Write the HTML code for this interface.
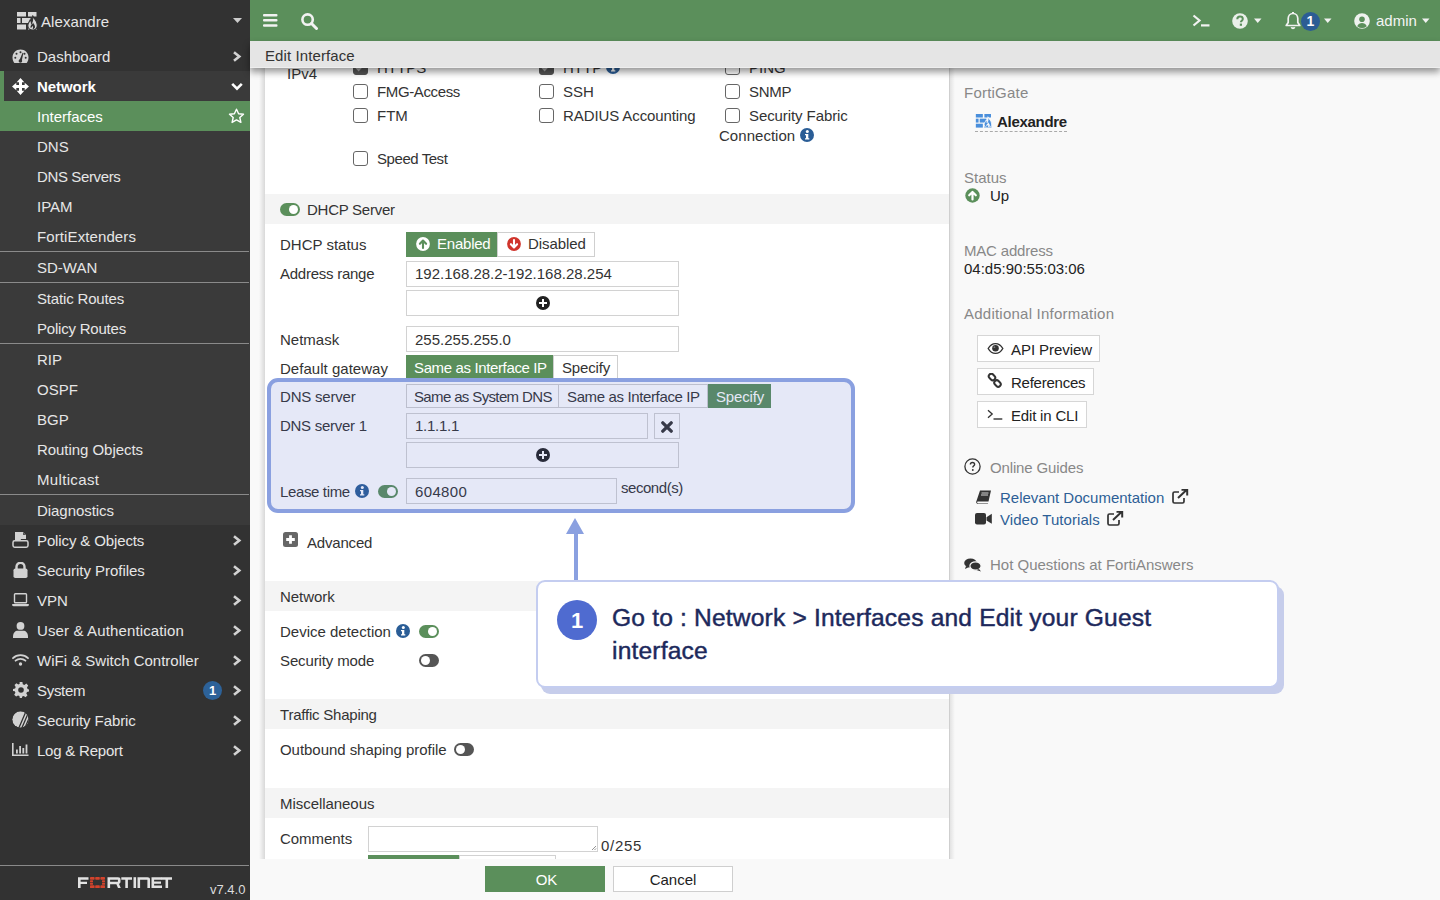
<!DOCTYPE html>
<html><head><meta charset="utf-8">
<style>
*{box-sizing:border-box;margin:0;padding:0}
html,body{width:1440px;height:900px;overflow:hidden;background:#f9f9f9;font-family:"Liberation Sans",sans-serif;font-size:15px;color:#333}
.a{position:absolute}
.t{position:absolute;white-space:nowrap;line-height:20px;height:20px}
#side{position:absolute;left:0;top:0;width:250px;height:900px;background:#323232}
#side .it{position:absolute;left:0;width:250px;height:30px;line-height:30px;color:#e6e6e6;white-space:nowrap}
#side .it span.l{position:absolute;left:37px;top:1px}
#side .sub{background:#3a3a3a}
#side .sep{position:absolute;left:0;width:249px;height:1px;background:#8a8a8a}
.chev{position:absolute;left:231px;top:10px;width:10px;height:10px}
#top{position:absolute;left:250px;top:0;width:1190px;height:41px;background:#5b8f5b}
#bar{position:absolute;left:250px;top:41px;width:1190px;height:27px;background:#e5e5e5;border-bottom:1px solid #eeeeee;box-shadow:0 4px 7px rgba(0,0,0,.42);z-index:5}
#content{position:absolute;left:265px;top:41px;width:684px;height:818px;background:#fff;overflow:hidden}
#cshadow{position:absolute;left:259px;top:41px;width:6px;height:818px;background:linear-gradient(to right,rgba(0,0,0,0),rgba(0,0,0,.13))}
#right{position:absolute;left:949px;top:41px;width:491px;height:818px;overflow:hidden;background:linear-gradient(to right,rgba(0,0,0,.09),rgba(0,0,0,0) 5px) #f9f9f9;border-left:1px solid #cfcfcf}
.sh{position:absolute;left:0;width:684px;height:30px;background:#f4f4f4}
.cb{position:absolute;width:15px;height:15px;border:1.5px solid #666;border-radius:3px;background:#fff}
.inp{position:absolute;border:1px solid #d2d2d2;background:#fff}
.btn{position:absolute;border:1px solid #cfcfcf;background:#fff;text-align:center;white-space:nowrap}
.grn{background:#5b8f5b;color:#fff;border-color:#5b8f5b}
.tog{position:absolute;width:20px;height:13px;border-radius:6.5px}
.tog.on{background:#5b8f5b}
.tog.on::after{content:"";position:absolute;right:1.6px;top:1.6px;width:9.8px;height:9.8px;border-radius:50%;background:#fff}
.tog.off{background:#555}
.tog.off::after{content:"";position:absolute;left:1.6px;top:1.6px;width:9.8px;height:9.8px;border-radius:50%;background:#fff}
.grey{color:#888}
#right .t{margin-top:1px}
.cb.chk{background:#555;border-color:#555}
.info{position:absolute;width:14px;height:14px;border-radius:50%;background:#2a5d96}
.info::before{content:"";position:absolute;left:5.6px;top:2.3px;width:3px;height:3px;border-radius:50%;background:#fff}
.info::after{content:"";position:absolute;left:4.6px;top:6px;width:2.6px;height:5.8px;border-left:1.8px solid transparent;border-top:1.2px solid #fff;background:linear-gradient(#fff,#fff) 1.8px 0/2.6px 100% no-repeat, linear-gradient(#fff,#fff) 0 100%/5px 1.6px no-repeat;box-sizing:content-box}
.plus{position:absolute;width:14px;height:14px;border-radius:50%;background:#222}
.plus::before{content:"";position:absolute;left:3px;top:5.75px;width:8px;height:2.5px;background:#fff}
.plus::after{content:"";position:absolute;left:5.75px;top:3px;width:2.5px;height:8px;background:#fff}

</style></head><body>

<!-- SIDEBAR -->
<div id="side">
  <svg class="a" style="left:17px;top:12px" width="21" height="18" viewBox="0 0 21 18">
    <g fill="#d8d8d8"><rect x="0" y="0" width="9" height="4.5"/><rect x="11" y="0" width="8.5" height="4.5"/><rect x="0" y="6" width="3.5" height="5"/><rect x="5" y="6" width="8.5" height="5"/><rect x="0" y="12.5" width="9" height="5"/><rect x="11" y="12.5" width="9" height="5"/></g>
    <path d="M15.5 3.5C16.5 6.5 20.3 8.5 20.3 13C20.3 16.3 18.3 18 15.8 18C13 18 10.8 16.3 10.8 13.5C10.8 11 12.5 9.8 13.3 7.8C14.3 9 14.5 10 14.5 11.2C15.8 9 16 6.5 15.5 3.5Z" fill="#d8d8d8" stroke="#323232" stroke-width="1.1"/>
    <path d="M16 10.5C16.8 12.3 18.3 13.3 18 15.3C17.7 16.8 16.3 17.2 15.5 17C16.3 16 16.2 14.5 15.3 13.8C15.2 15 14.6 15.6 13.8 16C13.2 15 13.6 13.5 14.5 12.8C15.3 12.2 15.8 11.5 16 10.5Z" fill="#323232"/>
  </svg>
  <div class="t" style="letter-spacing: 0.08px;left:41px;top:12px;color:#e6e6e6">Alexandre</div>
  <svg class="a" style="left:233px;top:18px" width="9" height="5"><path d="M0 0h9L4.5 5z" fill="#ccc"/></svg>

  <div class="it" style="top:41px"><span class="l">Dashboard</span></div>
  <div class="it sub" style="top:71px;border-left:4px solid #5b8f5b"><span class="l" style="letter-spacing:-0.062px;left:33px;color:#fff;font-weight:bold">Network</span></div>
  <div class="it" style="top:101px;background:#5b8f5b;color:#fff"><span class="l">Interfaces</span></div>
  <div class="a sub" style="left:0;top:131px;width:250px;height:394px"></div>
  <div class="it" style="top:131px"><span class="l">DNS</span></div>
  <div class="it" style="top:161px"><span class="l" style="letter-spacing:-0.366px;">DNS Servers</span></div>
  <div class="it" style="top:191px"><span class="l">IPAM</span></div>
  <div class="it" style="top:221px"><span class="l" style="letter-spacing:0.104px;">FortiExtenders</span></div>
  <div class="sep" style="top:251px"></div>
  <div class="it" style="top:252px"><span class="l">SD-WAN</span></div>
  <div class="sep" style="top:282px"></div>
  <div class="it" style="top:283px"><span class="l" style="letter-spacing:-0.171px;">Static Routes</span></div>
  <div class="it" style="top:313px"><span class="l" style="letter-spacing:-0.209px;">Policy Routes</span></div>
  <div class="sep" style="top:343px"></div>
  <div class="it" style="top:344px"><span class="l">RIP</span></div>
  <div class="it" style="top:374px"><span class="l">OSPF</span></div>
  <div class="it" style="top:404px"><span class="l">BGP</span></div>
  <div class="it" style="top:434px"><span class="l" style="letter-spacing:-0.049px;">Routing Objects</span></div>
  <div class="it" style="top:464px"><span class="l" style="letter-spacing:0.34px;">Multicast</span></div>
  <div class="sep" style="top:494px"></div>
  <div class="it" style="top:495px"><span class="l" style="letter-spacing:-0.05px;">Diagnostics</span></div>
  <div class="it" style="top:525px"><span class="l" style="letter-spacing:-0.123px;">Policy &amp; Objects</span></div>
  <div class="it" style="top:555px"><span class="l" style="letter-spacing:-0.037px;">Security Profiles</span></div>
  <div class="it" style="top:585px"><span class="l">VPN</span></div>
  <div class="it" style="top:615px"><span class="l" style="letter-spacing:0.13px;">User &amp; Authentication</span></div>
  <div class="it" style="top:645px"><span class="l">WiFi &amp; Switch Controller</span></div>
  <div class="it" style="top:675px"><span class="l" style="letter-spacing:-0.294px;">System</span></div>
  <div class="it" style="top:705px"><span class="l" style="letter-spacing:-0.085px;">Security Fabric</span></div>
  <div class="it" style="top:735px"><span class="l" style="letter-spacing:-0.22px;">Log &amp; Report</span></div>
  <div class="sep" style="top:865px"></div>
  <!-- sidebar icons -->
  <svg class="a" style="left:12px;top:49px" width="17" height="15" viewBox="0 0 17 15"><path d="M8.5 0.5C4 0.5 0.5 4 0.5 8.5C0.5 10.5 1.2 12.5 2.3 14H14.7C15.8 12.5 16.5 10.5 16.5 8.5C16.5 4 13 0.5 8.5 0.5Z" fill="#d2d2d2"/><g fill="#323232"><circle cx="3.3" cy="8.8" r="1"/><circle cx="4.5" cy="4.8" r="1"/><circle cx="13.7" cy="8.8" r="1"/><circle cx="12.5" cy="4.8" r="1"/><circle cx="8.5" cy="3.3" r="1"/><path d="M7.2 11.8L10.6 3.8L11.4 4.1L9.6 12.6Z"/><circle cx="8.4" cy="12" r="1.8"/></g></svg>
  <svg class="a" style="left:12px;top:78px" width="17" height="17" viewBox="0 0 17 17"><g fill="#fff"><path d="M8.5 0L12.3 4.3H10V7H12.7V4.7L17 8.5L12.7 12.3V10H10V12.7H12.3L8.5 17L4.7 12.7H7V10H4.3V12.3L0 8.5L4.3 4.7V7H7V4.3H4.7Z"/></g></svg>
  <svg class="a" style="left:232px;top:51px" width="10" height="11" viewBox="0 0 10 11"><path d="M2 1.2L7.3 5.5L2 9.8" fill="none" stroke="#d2d2d2" stroke-width="2.6"/></svg>
  <svg class="a" style="left:231px;top:82px" width="12" height="9" viewBox="0 0 12 9"><path d="M1.2 1.8L6 6.6L10.8 1.8" fill="none" stroke="#fff" stroke-width="2.6"/></svg>
  <svg class="a" style="left:228px;top:108px" width="17" height="16" viewBox="0 0 17 16"><path d="M8.5 1.2L10.6 5.7L15.5 6.2L11.8 9.5L12.9 14.4L8.5 11.9L4.1 14.4L5.2 9.5L1.5 6.2L6.4 5.7Z" fill="none" stroke="#fff" stroke-width="1.4" stroke-linejoin="round"/></svg>
  <svg class="a" style="left:12px;top:532px" width="17" height="16" viewBox="0 0 17 16"><path d="M3 0H11L14 3V7H9.5C9 7 8.7 7.5 8.7 8H3Z" fill="#d2d2d2"/><rect x="1" y="8.7" width="15" height="6.5" rx="1.7" fill="none" stroke="#d2d2d2" stroke-width="1.5"/><path d="M11 0L14 3H11Z" fill="#555"/></svg>
  <svg class="a" style="left:232px;top:535px" width="10" height="11" viewBox="0 0 10 11"><path d="M2 1.2L7.3 5.5L2 9.8" fill="none" stroke="#d2d2d2" stroke-width="2.6"/></svg>
  <svg class="a" style="left:13px;top:562px" width="15" height="16" viewBox="0 0 15 16"><path d="M3.5 7V4.8C3.5 2.4 5.3 0.8 7.5 0.8C9.7 0.8 11.5 2.4 11.5 4.8V7" fill="none" stroke="#d2d2d2" stroke-width="2.4"/><rect x="0.5" y="6.5" width="14" height="9.5" rx="1.8" fill="#d2d2d2"/></svg>
  <svg class="a" style="left:232px;top:565px" width="10" height="11" viewBox="0 0 10 11"><path d="M2 1.2L7.3 5.5L2 9.8" fill="none" stroke="#d2d2d2" stroke-width="2.6"/></svg>
  <svg class="a" style="left:12px;top:593px" width="17" height="14" viewBox="0 0 17 14"><rect x="2.5" y="0.7" width="12" height="9" rx="0.8" fill="none" stroke="#d2d2d2" stroke-width="1.4"/><path d="M0.2 11H16.8V12C16.8 12.8 16.2 13.2 15.5 13.2H1.5C0.8 13.2 0.2 12.8 0.2 12Z" fill="#d2d2d2"/></svg>
  <svg class="a" style="left:232px;top:595px" width="10" height="11" viewBox="0 0 10 11"><path d="M2 1.2L7.3 5.5L2 9.8" fill="none" stroke="#d2d2d2" stroke-width="2.6"/></svg>
  <svg class="a" style="left:13px;top:622px" width="15" height="16" viewBox="0 0 15 16"><circle cx="7.5" cy="3.9" r="3.9" fill="#d2d2d2"/><path d="M0 14.5C0 10.5 2.5 8.7 4.5 8.7H10.5C12.5 8.7 15 10.5 15 14.5V16H0Z" fill="#d2d2d2"/></svg>
  <svg class="a" style="left:232px;top:625px" width="10" height="11" viewBox="0 0 10 11"><path d="M2 1.2L7.3 5.5L2 9.8" fill="none" stroke="#d2d2d2" stroke-width="2.6"/></svg>
  <svg class="a" style="left:12px;top:654px" width="17" height="12" viewBox="0 0 17 12"><path d="M1 4.2C5 0.2 12 0.2 16 4.2M3.6 6.7C6.3 4.2 10.7 4.2 13.4 6.7" fill="none" stroke="#d2d2d2" stroke-width="1.8" stroke-linecap="round"/><circle cx="8.5" cy="10" r="1.7" fill="#d2d2d2"/></svg>
  <svg class="a" style="left:232px;top:655px" width="10" height="11" viewBox="0 0 10 11"><path d="M2 1.2L7.3 5.5L2 9.8" fill="none" stroke="#d2d2d2" stroke-width="2.6"/></svg>
  <svg class="a" style="left:13px;top:682px" width="16" height="16" viewBox="0 0 16 16"><path d="M6.6 0H9.4L9.8 2.2L11.4 2.9L13.3 1.6L15.2 3.6L14 5.5L14.6 7.1L16 7.5V9.5L14 10L13.3 11.4L14.5 13.3L12.6 15.2L10.7 14L9.2 14.6L8.9 16H6.8L6.4 14L5 13.4L3.1 14.6L1.2 12.7L2.4 10.8L1.8 9.3L0 8.9V6.9L2.1 6.4L2.7 5L1.5 3.1L3.4 1.2L5.3 2.4L6.7 1.8Z" fill="#d2d2d2"/><circle cx="8" cy="8" r="2.8" fill="#323232"/></svg>
  <div class="a" style="left:203px;top:681px;width:19px;height:19px;border-radius:50%;background:#2d6299;color:#fff;font-size:13px;font-weight:bold;line-height:19px;text-align:center">1</div>
  <svg class="a" style="left:232px;top:685px" width="10" height="11" viewBox="0 0 10 11"><path d="M2 1.2L7.3 5.5L2 9.8" fill="none" stroke="#d2d2d2" stroke-width="2.6"/></svg>
  <svg class="a" style="left:12px;top:711px" width="17" height="17" viewBox="0 0 17 17"><defs><clipPath id="cc"><circle cx="8.5" cy="8.5" r="8.3"/></clipPath></defs><g clip-path="url(#cc)"><circle cx="8.5" cy="8.5" r="8.3" fill="#d2d2d2"/><path d="M6 19L15 -2M9 19L18 -2M12 19L21 -2" stroke="#323232" stroke-width="1.3"/></g></svg>
  <svg class="a" style="left:232px;top:715px" width="10" height="11" viewBox="0 0 10 11"><path d="M2 1.2L7.3 5.5L2 9.8" fill="none" stroke="#d2d2d2" stroke-width="2.6"/></svg>
  <svg class="a" style="left:12px;top:743px" width="17" height="13" viewBox="0 0 17 13"><path d="M0.8 0V12.2H16.5" fill="none" stroke="#d2d2d2" stroke-width="1.6"/><g fill="#d2d2d2"><rect x="4" y="6.5" width="1.8" height="4"/><rect x="7.2" y="3" width="1.8" height="7.5"/><rect x="10.4" y="5" width="1.8" height="5.5"/><rect x="13.6" y="1.5" width="1.8" height="9"/></g></svg>
  <svg class="a" style="left:232px;top:745px" width="10" height="11" viewBox="0 0 10 11"><path d="M2 1.2L7.3 5.5L2 9.8" fill="none" stroke="#d2d2d2" stroke-width="2.6"/></svg>
  <!-- fortinet logo -->
  <svg class="a" style="left:78px;top:877px" width="94" height="12" viewBox="0 0 94 12"><g fill="#e2e2e2">
    <path d="M0 0.2H10.5V2.7H2.6V4.7H9V7.1H2.6V11H0Z"/>
    <path d="M29.5 0.2H40C41.7 0.2 42.5 1 42.5 2.5V4.8C42.5 5.8 41.9 6.6 41 6.9L42.8 11H40L38.4 7.2H32.1V11H29.5ZM32.1 2.7V4.8H39.9V2.7Z"/>
    <path d="M43.3 0.2H54V2.7H49.9V11H47.3V2.7H43.3Z"/>
    <rect x="55.5" y="0.2" width="2.6" height="10.8"/>
    <path d="M59.5 0.2H69.5C71.2 0.2 72 1 72 2.5V11H69.4V2.7H62.1V11H59.5Z"/>
    <path d="M73.5 0.2H84V2.7H76.1V4.4H83V6.8H76.1V8.5H84V11H73.5Z"/>
    <path d="M83.6 0.2H94V2.7H90.1V11H87.5V2.7H83.6Z"/>
  </g><g fill="#d4432c">
    <rect x="12" y="0" width="4.6" height="2.8" rx="0.7"/><rect x="17.2" y="0" width="4.6" height="2.8" rx="0.7"/><rect x="22.4" y="0" width="4.6" height="2.8" rx="0.7"/>
    <rect x="12" y="3.3" width="3" height="2" rx="0.5"/><rect x="24" y="3.3" width="3" height="2" rx="0.5"/>
    <rect x="12" y="5.8" width="3" height="2" rx="0.5"/><rect x="24" y="5.8" width="3" height="2" rx="0.5"/>
    <rect x="12" y="8.3" width="4.6" height="2.8" rx="0.7"/><rect x="17.2" y="8.3" width="4.6" height="2.8" rx="0.7"/><rect x="22.4" y="8.3" width="4.6" height="2.8" rx="0.7"/>
  </g></svg>

  <div class="t" style="left:210px;top:880px;color:#ddd;font-size:13px">v7.4.0</div>
</div>

<!-- TOP -->
<div id="top">
  <svg class="a" style="left:13px;top:13px" width="16" height="16" viewBox="0 0 16 16"><g fill="#f2f2f2"><rect x="0" y="1" width="14.5" height="2.5" rx="1"/><rect x="0" y="6" width="14.5" height="2.5" rx="1"/><rect x="0" y="11.3" width="14.5" height="2.5" rx="1"/></g></svg>
  <svg class="a" style="left:51px;top:13px" width="18" height="17" viewBox="0 0 18 17"><circle cx="6.6" cy="6.6" r="5.2" fill="none" stroke="#f2f2f2" stroke-width="2.6"/><path d="M10.5 10.5L15.5 15.5" stroke="#f2f2f2" stroke-width="3" stroke-linecap="round"/></svg>
  <svg class="a" style="left:942px;top:14px" width="19" height="14" viewBox="0 0 19 14"><path d="M1.5 1.5L7.5 6.5L1.5 11.5" fill="none" stroke="#f2f2f2" stroke-width="2.2"/><rect x="9" y="10.3" width="8.5" height="2.2" fill="#f2f2f2"/></svg>
  <svg class="a" style="left:982px;top:13px" width="16" height="16" viewBox="0 0 16 16"><circle cx="8" cy="8" r="7.8" fill="#e9efe9"/><path d="M5.3 6.2C5.3 4.6 6.5 3.6 8 3.6C9.6 3.6 10.8 4.6 10.8 6C10.8 7.6 8.9 7.8 8.9 9.2" fill="none" stroke="#5b8f5b" stroke-width="2"/><rect x="7.8" y="10.6" width="2.2" height="2.2" fill="#5b8f5b"/></svg>
  <svg class="a" style="left:1004px;top:18px" width="8" height="6"><path d="M0 0.5h7.5L3.75 5z" fill="#f2f2f2"/></svg>
  <svg class="a" style="left:1035px;top:12px" width="16" height="18" viewBox="0 0 16 18"><path d="M8 1.5C5 1.5 3.2 3.8 3.2 6.6V10.5L1.2 13.5H14.8L12.8 10.5V6.6C12.8 3.8 11 1.5 8 1.5Z" fill="none" stroke="#f2f2f2" stroke-width="1.7" stroke-linejoin="round"/><rect x="7" y="0" width="2" height="2" fill="#f2f2f2"/><path d="M6 15.3Q8 17.8 10 15.3" fill="#f2f2f2" stroke="#f2f2f2" stroke-width="1.2"/></svg>
  <div class="a" style="left:1051px;top:12px;width:19px;height:19px;border-radius:50%;background:#2c5d94;color:#fff;font-size:14px;font-weight:bold;line-height:19px;text-align:center">1</div>
  <svg class="a" style="left:1074px;top:18px" width="8" height="6"><path d="M0 0.5h7.5L3.75 5z" fill="#f2f2f2"/></svg>
  <svg class="a" style="left:1104px;top:13px" width="17" height="16" viewBox="0 0 17 16"><circle cx="8" cy="8" r="7.8" fill="#eef2ee"/><circle cx="8" cy="6.2" r="2.8" fill="#5b8f5b"/><path d="M3.2 13.2C4.2 10.8 6 10 8 10C10 10 11.8 10.8 12.8 13.2Q8 17 3.2 13.2Z" fill="#5b8f5b"/></svg>
  <div class="t" style="letter-spacing:0.028px;left:1126px;top:11px;color:#f4f4f4">admin</div>
  <svg class="a" style="left:1172px;top:18px" width="8" height="6"><path d="M0 0.5h7.5L3.75 5z" fill="#f2f2f2"/></svg>
</div>
<div id="bar"><div class="t" style="letter-spacing:0.097px;left:15px;top:5px;color:#333">Edit Interface</div></div>

<!-- CONTENT -->
<div id="cshadow"></div>
<div id="content"><div class="a" style="left:-265px;top:-41px;width:1440px;height:900px">
  <div class="t" style="left:287px;top:64px">IPv4</div>
  <!-- checkbox rows -->
  <div class="cb chk" style="left:353px;top:60px"></div><svg class="a" style="left:353px;top:60px" width="15" height="15" viewBox="0 0 15 15"><path d="M2.6 6.6L5.6 9.9L11.8 3" fill="none" stroke="#aaa" stroke-width="2.2"/></svg><div class="t" style="left:377px;top:58px">HTTPS</div>
  <div class="cb chk" style="left:539px;top:60px"></div><svg class="a" style="left:539px;top:60px" width="15" height="15" viewBox="0 0 15 15"><path d="M2.6 6.6L5.6 9.9L11.8 3" fill="none" stroke="#aaa" stroke-width="2.2"/></svg><div class="t" style="left:563px;top:58px">HTTP</div>
  <svg class="a" style="left:606px;top:60px" width="14" height="14" viewBox="0 0 14 14"><circle cx="7" cy="7" r="7" fill="#2a5d96"/><circle cx="7.3" cy="3.6" r="1.5" fill="#fff"/><path d="M5 6H8.3V10.3H9.3V11.6H5V10.3H6V7.3H5Z" fill="#fff"/></svg>
  <div class="cb" style="left:725px;top:60px"></div><div class="t" style="left:749px;top:58px">PING</div>

  <div class="cb" style="left:353px;top:84px"></div><div class="t" style="letter-spacing:-0.367px;left:377px;top:82px">FMG-Access</div>
  <div class="cb" style="left:539px;top:84px"></div><div class="t" style="left:563px;top:82px">SSH</div>
  <div class="cb" style="left:725px;top:84px"></div><div class="t" style="letter-spacing:-0.273px;left:749px;top:82px">SNMP</div>

  <div class="cb" style="left:353px;top:108px"></div><div class="t" style="left:377px;top:106px">FTM</div>
  <div class="cb" style="left:539px;top:108px"></div><div class="t" style="letter-spacing:-0.096px;left:563px;top:106px">RADIUS Accounting</div>
  <div class="cb" style="left:725px;top:108px"></div><div class="t" style="letter-spacing:-0.085px;left:749px;top:106px">Security Fabric</div>
  <div class="t" style="letter-spacing:0.036px;left:719px;top:126px">Connection</div>
  <svg class="a" style="left:800px;top:128px" width="14" height="14" viewBox="0 0 14 14"><circle cx="7" cy="7" r="7" fill="#2a5d96"/><circle cx="7.3" cy="3.6" r="1.5" fill="#fff"/><path d="M5 6H8.3V10.3H9.3V11.6H5V10.3H6V7.3H5Z" fill="#fff"/></svg>

  <div class="cb" style="left:353px;top:151px"></div><div class="t" style="letter-spacing:-0.438px;left:377px;top:149px">Speed Test</div>

  <!-- DHCP -->
  <div class="sh" style="left:265px;top:194px"></div>
  <div class="tog on" style="left:280px;top:203px"></div>
  <div class="t" style="letter-spacing:-0.259px;left:307px;top:200px">DHCP Server</div>

  <div class="t" style="left:280px;top:235px">DHCP status</div>
  <div class="btn grn" style="left:406px;top:232px;width:92px;height:25px"></div>
  <div class="t" style="letter-spacing:-0.223px;left:437px;top:234px;color:#fff">Enabled</div>
  <div class="btn" style="left:497px;top:232px;width:98px;height:25px"></div>
  <div class="t" style="letter-spacing:-0.078px;left:528px;top:234px">Disabled</div>

  <svg class="a" style="left:416px;top:237px" width="14" height="14" viewBox="0 0 14 14"><circle cx="7" cy="7" r="6.9" fill="#fff"/><path d="M7 11V3.8M3.9 6.8L7 3.6L10.1 6.8" fill="none" stroke="#5b8f5b" stroke-width="2.1" stroke-linecap="round" stroke-linejoin="round"/></svg>
  <svg class="a" style="left:507px;top:237px" width="14" height="14" viewBox="0 0 14 14"><circle cx="7" cy="7" r="6.9" fill="#d0342c"/><path d="M7 3V10.2M3.9 7.2L7 10.4L10.1 7.2" fill="none" stroke="#fff" stroke-width="2.1" stroke-linecap="round" stroke-linejoin="round"/></svg>
  <div class="t" style="letter-spacing:-0.255px;left:280px;top:264px">Address range</div>
  <div class="inp" style="left:406px;top:261px;width:273px;height:26px"></div>
  <div class="t" style="left:415px;top:264px">192.168.28.2-192.168.28.254</div>
  <div class="inp" style="left:406px;top:290px;width:273px;height:26px"></div>
  <div class="plus" style="left:536px;top:296px"></div>

  <div class="t" style="letter-spacing:0.009px;left:280px;top:330px">Netmask</div>
  <div class="inp" style="left:406px;top:326px;width:273px;height:26px"></div>
  <div class="t" style="left:415px;top:330px">255.255.255.0</div>

  <div class="t" style="letter-spacing:0.028px;left:280px;top:359px">Default gateway</div>
  <div class="btn grn" style="left:406px;top:355px;width:148px;height:25px"></div>
  <div class="t" style="letter-spacing:-0.366px;left:414px;top:358px;color:#fff">Same as Interface IP</div>
  <div class="btn" style="left:553px;top:355px;width:65px;height:25px"></div>
  <div class="t" style="letter-spacing:-0.172px;left:562px;top:358px">Specify</div>

  <div class="t" style="letter-spacing:-0.202px;left:280px;top:387px">DNS server</div>
  <div class="btn" style="left:406px;top:384px;width:153px;height:24px"></div>
  <div class="t" style="letter-spacing:-0.637px;left:414px;top:387px">Same as System DNS</div>
  <div class="btn" style="left:558px;top:384px;width:150px;height:24px"></div>
  <div class="t" style="letter-spacing:-0.366px;left:567px;top:387px">Same as Interface IP</div>
  <div class="btn grn" style="left:708px;top:384px;width:63px;height:24px"></div>
  <div class="t" style="letter-spacing:-0.172px;left:716px;top:387px;color:#fff">Specify</div>

  <div class="t" style="letter-spacing:-0.273px;left:280px;top:416px">DNS server 1</div>
  <div class="inp" style="left:406px;top:413px;width:242px;height:26px"></div>
  <div class="t" style="letter-spacing:-0.268px;left:415px;top:416px">1.1.1.1</div>
  <div class="inp" style="left:654px;top:413px;width:26px;height:26px"></div>
  <svg class="a" style="left:661px;top:421px" width="12" height="12" viewBox="0 0 12 12"><path d="M1.8 1.8L10.2 10.2M10.2 1.8L1.8 10.2" stroke="#333" stroke-width="3.3" stroke-linecap="round"/></svg>
  <div class="inp" style="left:406px;top:442px;width:273px;height:26px"></div>
  <div class="plus" style="left:536px;top:448px"></div>

  <div class="t" style="letter-spacing:-0.362px;left:280px;top:482px">Lease time</div>
  <svg class="a" style="left:355px;top:484px" width="14" height="14" viewBox="0 0 14 14"><circle cx="7" cy="7" r="7" fill="#2a5d96"/><circle cx="7.3" cy="3.6" r="1.5" fill="#fff"/><path d="M5 6H8.3V10.3H9.3V11.6H5V10.3H6V7.3H5Z" fill="#fff"/></svg>
  <div class="tog on" style="left:378px;top:485px"></div>
  <div class="inp" style="left:406px;top:478px;width:211px;height:26px"></div>
  <div class="t" style="letter-spacing:0.365px;left:415px;top:482px">604800</div>
  <div class="t" style="letter-spacing:-0.457px;left:621px;top:478px">second(s)</div>

  <!-- highlight -->
  <div class="a" style="left:267px;top:378px;width:588px;height:135px;border:4px solid #8aa0e0;border-radius:11px;background:rgba(82,102,202,.15)"></div>
  <!-- arrow -->
  <svg class="a" style="left:560px;top:515px" width="30" height="70" viewBox="0 0 30 70"><path d="M15 3L24 19H6z" fill="#8aa0e0"/><rect x="14" y="17" width="4" height="53" fill="#8aa0e0"/></svg>

  <div class="a" style="left:283px;top:532px;width:15px;height:15px;background:#666;border-radius:2.5px"></div>
  <svg class="a" style="left:283px;top:532px" width="15" height="15"><path d="M7.5 3.2v8.6M3.2 7.5h8.6" stroke="#fff" stroke-width="2.8"/></svg>
  <div class="t" style="letter-spacing:-0.184px;left:307px;top:533px">Advanced</div>

  <div class="sh" style="left:265px;top:581px"></div>
  <div class="t" style="letter-spacing:-0.062px;left:280px;top:587px">Network</div>
  <div class="t" style="left:280px;top:622px">Device detection</div>
  <svg class="a" style="left:396px;top:624px" width="14" height="14" viewBox="0 0 14 14"><circle cx="7" cy="7" r="7" fill="#2a5d96"/><circle cx="7.3" cy="3.6" r="1.5" fill="#fff"/><path d="M5 6H8.3V10.3H9.3V11.6H5V10.3H6V7.3H5Z" fill="#fff"/></svg>
  <div class="tog on" style="left:419px;top:625px"></div>
  <div class="t" style="letter-spacing:-0.125px;left:280px;top:651px">Security mode</div>
  <div class="tog off" style="left:419px;top:654px"></div>

  <div class="sh" style="left:265px;top:699px"></div>
  <div class="t" style="letter-spacing:-0.221px;left:280px;top:705px">Traffic Shaping</div>
  <div class="t" style="letter-spacing:-0.047px;left:280px;top:740px">Outbound shaping profile</div>
  <div class="tog off" style="left:454px;top:743px"></div>

  <div class="sh" style="left:265px;top:788px"></div>
  <div class="t" style="letter-spacing:-0.05px;left:280px;top:794px">Miscellaneous</div>
  <div class="t" style="letter-spacing:-0.041px;left:280px;top:829px">Comments</div>
  <div class="inp" style="left:368px;top:826px;width:230px;height:26px"></div><svg class="a" style="left:590px;top:844px" width="7" height="7" viewBox="0 0 7 7"><path d="M6 2L2 6M6 4.5L4.5 6" stroke="#888" stroke-width="0.9"/></svg>
  <div class="t" style="letter-spacing:0.691px;left:601px;top:836px">0/255</div>
  <div class="a" style="left:368px;top:855px;width:91px;height:10px;background:#5b8f5b"></div>
  <div class="inp" style="left:459px;top:855px;width:97px;height:10px"></div>
</div></div>

<!-- RIGHT -->
<div id="right"><div class="a" style="left:-950px;top:-41px;width:1440px;height:900px">
  <div class="t grey" style="letter-spacing:0.219px;left:964px;top:82px">FortiGate</div>
  <svg class="a" style="left:975px;top:114px" width="18" height="14" viewBox="0 0 21 18"><g fill="#4a8fdc"><rect x="0" y="0" width="9" height="4.5"/><rect x="11" y="0" width="8.5" height="4.5"/><rect x="0" y="6" width="3.5" height="5"/><rect x="5" y="6" width="8.5" height="5"/><rect x="0" y="12.5" width="9" height="5"/><rect x="11" y="12.5" width="9" height="5"/></g><path d="M15.5 3.5C16.5 6.5 20.3 8.5 20.3 13C20.3 16.3 18.3 18 15.8 18C13 18 10.8 16.3 10.8 13.5C10.8 11 12.5 9.8 13.3 7.8C14.3 9 14.5 10 14.5 11.2C15.8 9 16 6.5 15.5 3.5Z" fill="#4a8fdc" stroke="#f9f9f9" stroke-width="1.1"/><path d="M16 10.5C16.8 12.3 18.3 13.3 18 15.3C17.7 16.8 16.3 17.2 15.5 17C16.3 16 16.2 14.5 15.3 13.8C15.2 15 14.6 15.6 13.8 16C13.2 15 13.6 13.5 14.5 12.8C15.3 12.2 15.8 11.5 16 10.5Z" fill="#f9f9f9"/></svg>
  <div class="t" style="letter-spacing: -0.3px;left:997px;top:111px;font-weight:bold;color:#222">Alexandre</div>
  <div class="a" style="left:975px;top:131px;width:92px;height:0;border-top:1px dashed #aaa"></div>

  <div class="t grey" style="letter-spacing:-0.005px;left:964px;top:167px">Status</div>
  <svg class="a" style="left:965px;top:188px" width="15" height="15" viewBox="0 0 15 15"><circle cx="7.5" cy="7.5" r="7.2" fill="#5b8f5b"/><path d="M7.5 11.5V4.3M4.2 7.3L7.5 4L10.8 7.3" fill="none" stroke="#fff" stroke-width="2.2" stroke-linecap="round" stroke-linejoin="round"/></svg>
  <div class="t" style="left:990px;top:185px;color:#222">Up</div>

  <div class="t grey" style="letter-spacing:-0.193px;left:964px;top:240px">MAC address</div>
  <div class="t" style="left:964px;top:258px;color:#222">04:d5:90:55:03:06</div>

  <div class="t grey" style="letter-spacing:0.234px;left:964px;top:303px">Additional Information</div>
  <div class="btn" style="left:977px;top:335px;width:123px;height:27px;border-color:#d6d6d6"></div>
  <svg class="a" style="left:987px;top:342px" width="17" height="13" viewBox="0 0 17 13"><path d="M1.2 6.5C3 3.3 5.6 1.6 8.5 1.6C11.4 1.6 14 3.3 15.8 6.5C14 9.7 11.4 11.4 8.5 11.4C5.6 11.4 3 9.7 1.2 6.5Z" fill="none" stroke="#333" stroke-width="1.4"/><circle cx="8.5" cy="6.2" r="3.3" fill="#333"/><circle cx="7.4" cy="5.2" r="0.9" fill="#777"/></svg>
  <div class="t" style="letter-spacing:-0.064px;left:1011px;top:339px;color:#222">API Preview</div>
  <div class="btn" style="left:977px;top:368px;width:117px;height:27px;border-color:#d6d6d6"></div>
  <svg class="a" style="left:987px;top:373px" width="16" height="16" viewBox="0 0 16 16"><g fill="none" stroke="#333" stroke-width="2"><rect x="1.5" y="1.5" width="7" height="5" rx="2.5" transform="rotate(45 5 4)"/><rect x="7" y="8" width="7" height="5" rx="2.5" transform="rotate(45 10.5 10.5)"/></g></svg>
  <div class="t" style="letter-spacing:-0.247px;left:1011px;top:372px;color:#222">References</div>
  <div class="btn" style="left:977px;top:401px;width:110px;height:27px;border-color:#d6d6d6"></div>
  <svg class="a" style="left:987px;top:409px" width="16" height="12" viewBox="0 0 16 12"><path d="M1 1.2L5.2 5L1 8.8" fill="none" stroke="#333" stroke-width="1.3"/><rect x="6.5" y="9.3" width="8.8" height="1.4" fill="#333"/></svg>
  <div class="t" style="letter-spacing:-0.178px;left:1011px;top:405px;color:#222">Edit in CLI</div>

  <svg class="a" style="left:964px;top:458px" width="18" height="18" viewBox="0 0 18 18"><circle cx="8.5" cy="8.5" r="7.6" fill="none" stroke="#333" stroke-width="1.3"/><path d="M6.4 6.6C6.4 5.3 7.3 4.5 8.5 4.5C9.8 4.5 10.6 5.3 10.6 6.4C10.6 7.8 8.8 7.9 8.8 9.6" fill="none" stroke="#333" stroke-width="1.4"/><circle cx="8.8" cy="12" r="0.9" fill="#333"/></svg>
  <div class="t grey" style="letter-spacing:-0.139px;left:990px;top:457px">Online Guides</div>
  <svg class="a" style="left:976px;top:490px" width="16" height="14" viewBox="0 0 16 14"><path d="M4 0.5H15L12.5 11.5H2.2C1.3 11.5 1 12 1.1 12.5C1.2 13 1.6 13.2 2.2 13.2H12.2L11.8 13.8H1.8C0.6 13.8 -0.1 12.8 0.3 11.6Z" fill="#333"/><path d="M5.5 3H12.5M5 5H12" stroke="#fff" stroke-width="0.8"/></svg>
  <div class="t" style="left:1000px;top:487px;color:#2d5f96">Relevant Documentation</div>
  <svg class="a" style="left:1172px;top:489px" width="17" height="15" viewBox="0 0 17 15"><path d="M7 3H2.5C1.7 3 1 3.7 1 4.5V12.5C1 13.3 1.7 14 2.5 14H10.5C11.3 14 12 13.3 12 12.5V9" fill="none" stroke="#333" stroke-width="1.7"/><path d="M6 9L14.5 1M9.5 0.8H15.2V6.5" fill="none" stroke="#333" stroke-width="2"/></svg>
  <svg class="a" style="left:975px;top:513px" width="17" height="12" viewBox="0 0 17 12"><rect x="0" y="0" width="11" height="11.5" rx="2" fill="#333"/><path d="M11.5 4.2L16.8 0.8V10.8L11.5 7.4Z" fill="#333"/></svg>
  <div class="t" style="letter-spacing:0.053px;left:1000px;top:509px;color:#2d5f96">Video Tutorials</div>
  <svg class="a" style="left:1107px;top:511px" width="17" height="15" viewBox="0 0 17 15"><path d="M7 3H2.5C1.7 3 1 3.7 1 4.5V12.5C1 13.3 1.7 14 2.5 14H10.5C11.3 14 12 13.3 12 12.5V9" fill="none" stroke="#333" stroke-width="1.7"/><path d="M6 9L14.5 1M9.5 0.8H15.2V6.5" fill="none" stroke="#333" stroke-width="2"/></svg>

  <svg class="a" style="left:964px;top:558px" width="18" height="14" viewBox="0 0 18 14"><ellipse cx="6.5" cy="5" rx="6.3" ry="4.6" fill="#333"/><path d="M2 8L1 11L5 9Z" fill="#333"/><ellipse cx="11.5" cy="8" rx="5.6" ry="4.2" fill="#333" stroke="#f9f9f9" stroke-width="1.2"/><path d="M15 11L17 13.5L12.5 12Z" fill="#333"/></svg>
  <div class="t grey" style="left:990px;top:554px">Hot Questions at FortiAnswers</div>
</div></div>

<!-- BOTTOM -->
<div class="btn grn" style="left:485px;top:866px;width:120px;height:26px;line-height:26px;font-size:15px;padding-left:3px">OK</div>
<div class="btn" style="left:613px;top:866px;width:120px;height:26px;line-height:26px;font-size:15px;color:#222;border-color:#cfcfcf">Cancel</div>

<!-- CALLOUT -->
<div class="a" style="left:536px;top:580px;width:743px;height:108px;border:2px solid #c4cdf0;border-radius:9px;background:#fff;box-shadow:5px 6px 0 0 #c6cdeb;z-index:8">
  <div class="a" style="left:19px;top:18px;width:40px;height:40px;border-radius:50%;background:#4f6bd0;color:#fff;font-weight:bold;font-size:22px;line-height:41px;text-align:center">1</div>
  <div class="a" style="left:74px;top:20px;width:640px;font-size:24.6px;line-height:32.5px;color:#1d295c;-webkit-text-stroke:0.45px #1d295c;letter-spacing:0.17px">Go to : Network &gt; Interfaces and Edit your Guest<br>interface</div>
</div>
</body></html>
